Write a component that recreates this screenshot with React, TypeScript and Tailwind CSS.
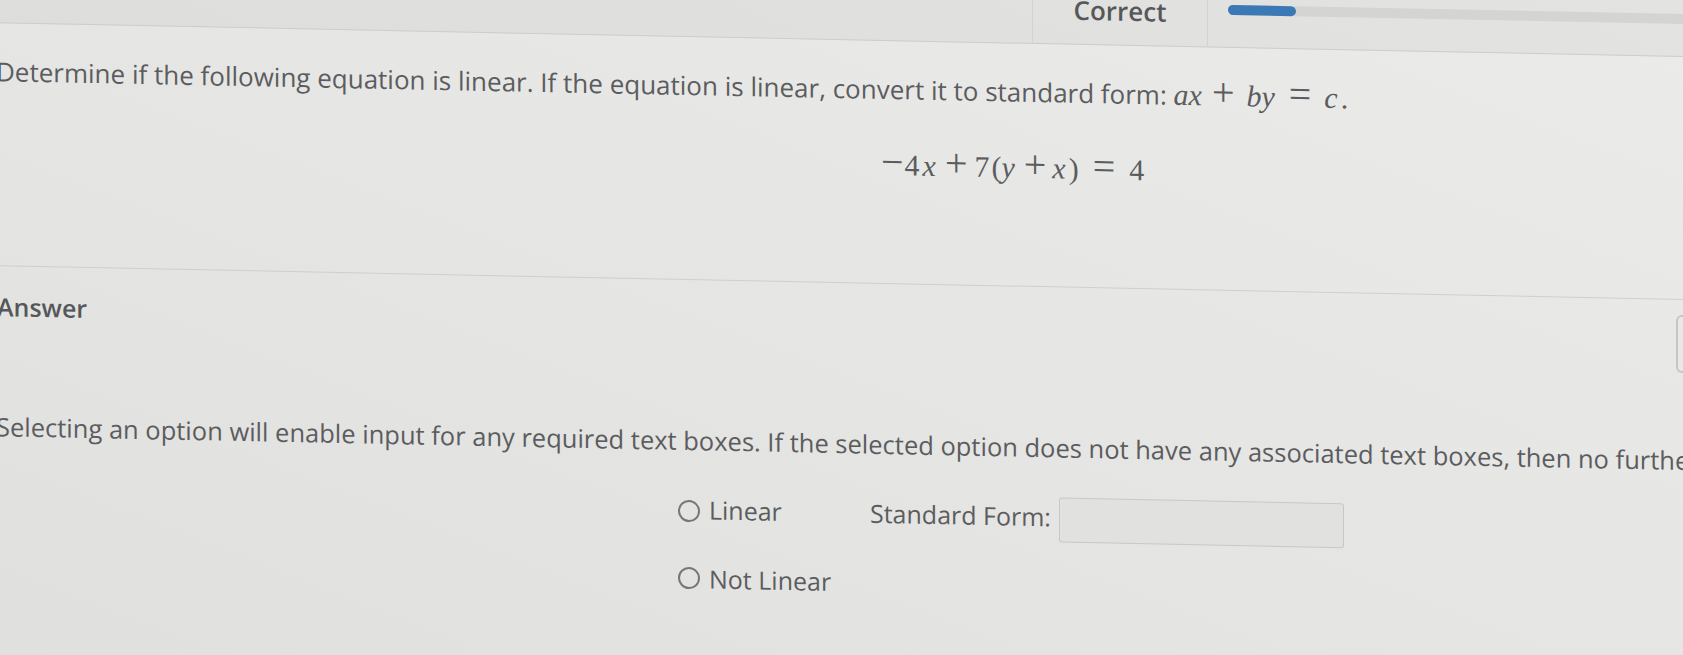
import type { ReactNode } from "react";

function Op({ children, className = "" }: { children: ReactNode; className?: string }) {
  return <span className={`text-[40px] leading-[20px] ${className}`}>{children}</span>;
}

export default function App() {
  return (
    <div className="h-[655px] w-[1683px] overflow-hidden bg-linear-to-tr from-[#e0e0de] to-[#ebebe9] font-['Open_Sans',sans-serif] text-[#5b5c60]">
      <div className="h-[720px] w-[1683px] origin-top-right skew-y-[1.15deg]">
        <header className="flex h-[57px] border-b border-[#cdcdcb] bg-black/[0.03]">
          <div className="w-[1032px] shrink-0" />
          <div className="flex w-[176px] shrink-0 justify-center border-x border-[#d3d3d1] pt-[4px] text-[26px] font-semibold leading-[36px] text-[#56575b]">
            Correct
          </div>
          <div className="min-w-0 flex-1 pl-[20px] pt-[14px]">
            <div className="h-[10px] w-[600px] rounded-full bg-[#d4d4d2]">
              <div className="h-full w-[68px] rounded-full bg-[#3b78b6]" />
            </div>
          </div>
        </header>

        <section className="h-[243px] border-b border-[#cfcfcd] pt-[30px]">
          <p className="-ml-[4px] whitespace-nowrap text-[26px] leading-[36px]">
            Determine if the following equation is linear. If the equation is linear, convert it to standard form:{" "}
            <span className="font-['Liberation_Serif',serif] text-[30px]">
              <i>a</i>
              <i>x</i>
              <Op className="ml-[10px] text-[36px]">+</Op>
              <i className="ml-[12px]">b</i>
              <i>y</i>
              <Op className="ml-[14px]">=</Op>
              <i className="ml-[13px]">c</i>
              <span className="ml-[3px]">.</span>
            </span>
          </p>
          <div className="mt-[40px] whitespace-nowrap pl-[881px] font-['Liberation_Serif',serif] text-[30px] leading-[36px]">
            <Op>−</Op>
            <span className="ml-[1px]">4</span>
            <i className="ml-[3px]">x</i>
            <Op className="ml-[9px]">+</Op>
            <span className="ml-[7px]">7</span>
            <span className="ml-[2px]">(</span>
            <i>y</i>
            <Op className="ml-[9px]">+</Op>
            <i className="ml-[6px]">x</i>
            <span className="ml-[3px]">)</span>
            <Op className="ml-[14px]">=</Op>
            <span className="ml-[14px]">4</span>
          </div>
        </section>

        <div className="flex items-start justify-between">
          <h2 className="-ml-[3px] mt-[22px] text-[25px] font-semibold leading-[36px] text-[#56575b]">Answer</h2>
          <div className="-mr-[33px] mt-[15px] h-[58px] w-[40px] rounded-[6px] border-2 border-[#c6c6c4]" />
        </div>

        <p className="-ml-[4px] mt-[69px] whitespace-nowrap text-[25.5px] leading-[36px]">
          Selecting an option will enable input for any required text boxes. If the selected option does not have any associated text boxes, then no further input is required.
        </p>

        <div className="mt-[32px] pl-[678px]">
          <div className="flex items-start">
            <label className="flex w-[192px] items-start">
              <span className="mt-[10px] h-[22px] w-[22px] shrink-0 rounded-full border-2 border-[#77777a]" />
              <span className="ml-[9px] mt-[1px] text-[25px] leading-[36px]">Linear</span>
            </label>
            <span className="mt-[1px] text-[25px] leading-[36px]">Standard Form:</span>
            <div className="ml-[8px] h-[45px] w-[285px] rounded-[3px] border border-[#c8c8c6] bg-[#e1e1df]" />
          </div>
          <label className="mt-[25px] flex items-start">
            <span className="mt-[7px] h-[22px] w-[22px] shrink-0 rounded-full border-2 border-[#77777a]" />
            <span className="ml-[9px] text-[25px] leading-[36px]">Not Linear</span>
          </label>
        </div>
      </div>
    </div>
  );
}
